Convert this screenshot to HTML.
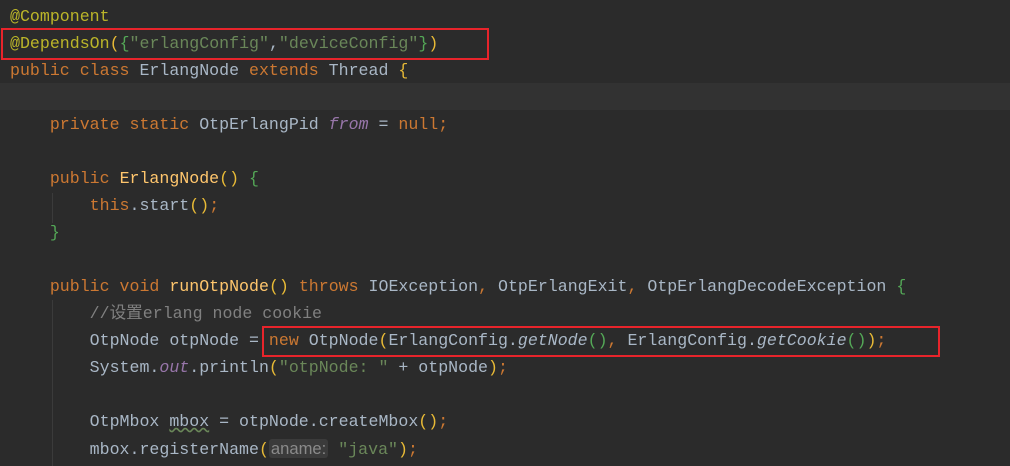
<!DOCTYPE html>
<html><head><style>
body{margin:0;width:1010px;height:466px;background:#2b2b2b;overflow:hidden;position:relative;font-family:"Liberation Mono","Noto Sans CJK SC",monospace;font-size:16.6px;color:#a9b7c6}
.l{position:absolute;left:10px;height:27px;line-height:27px;white-space:pre}
.k{color:#cc7832}.a{color:#bbb529}.s{color:#6a8759}.c{color:#808080}.p{color:#9876aa;font-style:italic}.m{color:#ffc66d}.i{font-style:italic}.y{color:#e8ba36}.g{color:#54a857}
.box{position:absolute;border:2px solid #e8242b}
.hint{background:#3b3b3b;color:#8a8a8a;border-radius:3px;padding:0 2px}
</style></head><body>
<div style="position:absolute;left:0;top:83px;width:1010px;height:27px;background:#323232"></div>
<div style="position:absolute;left:52px;top:193px;width:1px;height:30px;background:#3b3b3b"></div>
<div style="position:absolute;left:52px;top:300px;width:1px;height:166px;background:#3b3b3b"></div>
<div class="l" style="top:3px"><span class="a">@Component</span></div>
<div class="l" style="top:30px"><span class="a">@DependsOn</span><span class="y">(</span><span class="g">{</span><span class="s">"erlangConfig"</span>,<span class="s">"deviceConfig"</span><span class="g">}</span><span class="y">)</span></div>
<div class="l" style="top:57px"><span class="k">public class </span>ErlangNode <span class="k">extends </span>Thread <span class="y">{</span></div>
<div class="l" style="top:111px">    <span class="k">private static </span>OtpErlangPid <span class="p">from</span> = <span class="k">null;</span></div>
<div class="l" style="top:165px">    <span class="k">public </span><span class="m">ErlangNode</span><span class="y">()</span> <span class="g">{</span></div>
<div class="l" style="top:192px">        <span class="k">this</span>.start<span class="y">()</span><span class="k">;</span></div>
<div class="l" style="top:219px">    <span class="g">}</span></div>
<div class="l" style="top:273px">    <span class="k">public void </span><span class="m">runOtpNode</span><span class="y">()</span> <span class="k">throws </span>IOException<span class="k">, </span>OtpErlangExit<span class="k">, </span>OtpErlangDecodeException <span class="g">{</span></div>
<div class="l" style="top:300px">        <span class="c">//设置erlang node cookie</span></div>
<div class="l" style="top:327px">        OtpNode otpNode = <span class="k">new </span>OtpNode<span class="y">(</span>ErlangConfig.<span class="i">getNode</span><span class="g">()</span><span class="k">, </span>ErlangConfig.<span class="i">getCookie</span><span class="g">()</span><span class="y">)</span><span class="k">;</span></div>
<div class="l" style="top:354px">        System.<span class="p">out</span>.println<span class="y">(</span><span class="s">"otpNode: "</span> + otpNode<span class="y">)</span><span class="k">;</span></div>
<div class="l" style="top:408px">        OtpMbox <span style="text-decoration:underline wavy #6a8759">mbox</span> = otpNode.createMbox<span class="y">()</span><span class="k">;</span></div>
<div class="l" style="top:435px">        mbox.registerName<span class="y">(</span><span class="hint" style="font-family:'Liberation Sans',sans-serif">aname:</span> <span class="s">"java"</span><span class="y">)</span><span class="k">;</span></div>
<div class="box" style="left:1px;top:28px;width:484px;height:28px"></div>
<div class="box" style="left:262px;top:326px;width:674px;height:27px"></div>
</body></html>
